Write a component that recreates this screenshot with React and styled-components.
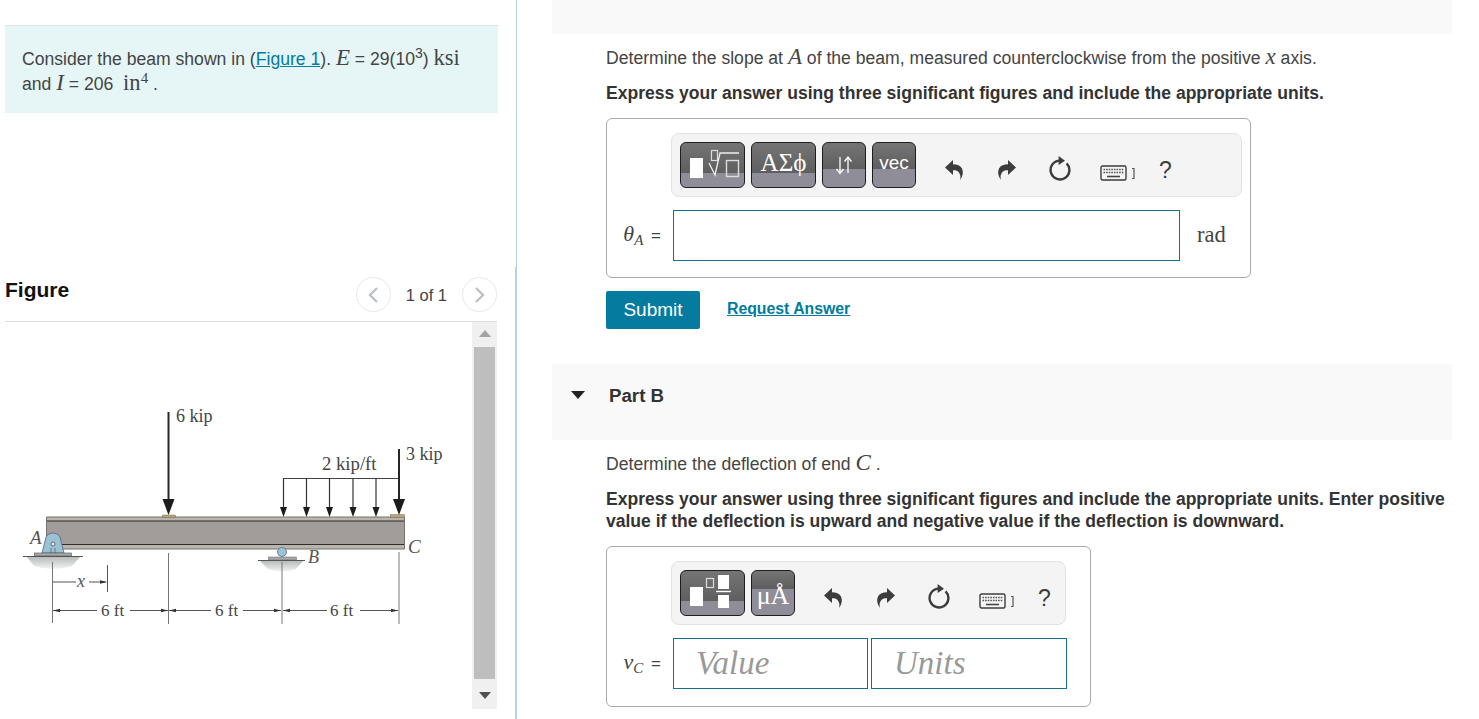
import React from "react";
import styled, { createGlobalStyle } from "styled-components";

const GlobalStyle = createGlobalStyle`
  html, body {
    margin: 0;
    padding: 0;
    background: #fff;
    font-family: "Liberation Sans", Arial, sans-serif;
    color: #333;
  }
`;

function Hat({ x, y, big }) {
  const w = big ? 6 : 3.5;
  const h = big ? 16 : 10;
  return <polygon points={`${x - w},${y - h} ${x + w},${y - h} ${x},${y}`} fill="#1c1c1c" />;
}

function DimTick({ x, y, dir }) {
  return <polygon points={`${x},${y} ${x + dir * 7},${y - 1.8} ${x + dir * 7},${y + 1.8}`} fill="#333" />;
}

function BeamFigure() {
  const loads = [283.5, 306.5, 329.5, 353, 376];
  return (
    <svg width="467" height="387" viewBox="5 322 467 387">
      <defs>
        <linearGradient id="ground" x1="0" y1="0" x2="0" y2="1">
          <stop offset="0" stopColor="#b9bcbc" />
          <stop offset="1" stopColor="#f2f3f3" />
        </linearGradient>
      </defs>

      {/* beam */}
      <rect x="46.5" y="517" width="358" height="32" fill="#a29c9b" />
      <rect x="46.5" y="517" width="358" height="4" fill="#b9b5ad" />
      <rect x="46.5" y="545" width="358" height="4" fill="#b9b5ad" />
      <path d="M46.5 521H404.5M46.5 544.5H404.5" stroke="#2f2d2d" strokeWidth="1" />
      <path d="M46.5 549V517H404.5V549H46.5" stroke="#77736f" strokeWidth="1" fill="none" />

      {/* support A */}
      <path d="M23 556.5H83" stroke="#555" strokeWidth="1" />
      <path d="M27 557H80L72 566Q53 572 34 566Z" fill="url(#ground)" />
      <path d="M42 553L46 537Q48 533 53 533Q58 533 60 537L64 553Z" fill="#9cc0d4" stroke="#4e6b7d" strokeWidth="0.8" />
      <circle cx="53" cy="544" r="2" fill="#e8f1f5" stroke="#3b4f5c" strokeWidth="0.8" />
      <path d="M51 548V553M55 548V553" stroke="#4e6b7d" strokeWidth="0.8" />
      <rect x="34.5" y="553" width="37" height="3" fill="#a7a9a8" stroke="#555" strokeWidth="0.6" />
      <text x="30" y="544" fontFamily="Liberation Serif" fontStyle="italic" fontSize="19" fill="#555">A</text>

      {/* 6 kip */}
      <path d="M168.5 412V500" stroke="#262626" strokeWidth="2" />
      <Hat x={168.5} y={515} big />
      <rect x="162.5" y="515" width="13" height="2.5" fill="#b7a67b" stroke="#6b6243" strokeWidth="0.4" />
      <text x="176" y="421.5" fontFamily="Liberation Serif" fontSize="18" fill="#444">6 kip</text>

      {/* distributed load */}
      <path d="M283 478.5H399" stroke="#444" strokeWidth="1" />
      {loads.map((x) => (
        <g key={x}>
          <path d={`M${x} 478V508`} stroke="#333" strokeWidth="1.2" />
          <Hat x={x} y={517} />
        </g>
      ))}
      <text x="322" y="470" fontFamily="Liberation Serif" fontSize="18.7" fill="#444">2 kip/ft</text>

      {/* 3 kip */}
      <path d="M399 449V500" stroke="#262626" strokeWidth="2" />
      <Hat x={399} y={515} big />
      <rect x="390.5" y="514.5" width="14" height="3" fill="#b7a67b" stroke="#6b6243" strokeWidth="0.4" />
      <text x="406" y="460" fontFamily="Liberation Serif" fontSize="18" fill="#444">3 kip</text>

      {/* support B */}
      <path d="M258 560.5H305" stroke="#555" strokeWidth="1" />
      <path d="M260 561H303L296 569Q282 574 268 569Z" fill="url(#ground)" />
      <rect x="268.5" y="557" width="28" height="3" fill="#a7a9a8" stroke="#666" strokeWidth="0.5" />
      <circle cx="282" cy="552" r="4.5" fill="#9cc3d3" stroke="#54707d" strokeWidth="0.8" />
      <text x="308" y="563" fontFamily="Liberation Serif" fontStyle="italic" fontSize="18" fill="#555">B</text>
      <text x="408" y="553" fontFamily="Liberation Serif" fontStyle="italic" fontSize="19" fill="#555">C</text>

      {/* dimension lines */}
      <path d="M52.5 562V623M168.5 553V624M282 562V624M399 552V624" stroke="#777" strokeWidth="1" />
      <path d="M107.5 565V592" stroke="#555" strokeWidth="1" />
      <path d="M53 582H76M89 582H106" stroke="#555" strokeWidth="1" />
      <DimTick x={107} y={582} dir={-1} />
      <text x="77" y="587" fontFamily="Liberation Serif" fontStyle="italic" fontSize="18" fill="#555">x</text>

      <path d="M53 610.5H97M130 610.5H168M169 610.5H211M243 610.5H281M283 610.5H327M360 610.5H398" stroke="#555" strokeWidth="1" />
      <DimTick x={53} y={610.5} dir={1} />
      <DimTick x={168} y={610.5} dir={-1} />
      <DimTick x={169} y={610.5} dir={1} />
      <DimTick x={281} y={610.5} dir={-1} />
      <DimTick x={283} y={610.5} dir={1} />
      <DimTick x={398} y={610.5} dir={-1} />
      <text x="101" y="616" fontFamily="Liberation Serif" fontSize="17" fill="#444">6 ft</text>
      <text x="215" y="616" fontFamily="Liberation Serif" fontSize="17" fill="#444">6 ft</text>
      <text x="330" y="616" fontFamily="Liberation Serif" fontSize="17" fill="#444">6 ft</text>
    </svg>
  );
}

function UndoIcon({ flip }) {
  return (
    <svg width="20" height="22" viewBox="0 0 20 22" style={flip ? { transform: "scaleX(-1)" } : undefined}>
      <path d="M9 1L1 8.5L9 16V11.2C13 11 15.6 12.6 16.4 17C16.5 18.4 16.4 19.6 16 21C19 17 19.6 13 18 9.6C16.4 6.4 13 5.2 9 5.2Z" fill="#3c3c3c" />
    </svg>
  );
}

function ResetIcon() {
  return (
    <svg width="24" height="26" viewBox="0 0 24 26">
      <path d="M18.6 8.3A9.4 9.4 0 1 1 11 5.65" fill="none" stroke="#3c3c3c" strokeWidth="2.4" />
      <polygon points="10.6,1 17,5.8 10.6,10" fill="#3c3c3c" />
    </svg>
  );
}

function KeyboardIcon() {
  return (
    <svg width="36" height="16" viewBox="0 0 36 16">
      <rect x="1" y="1" width="25" height="14" rx="1.5" fill="#f6f6f6" stroke="#3c3c3c" strokeWidth="1.4" />
      <path d="M3.5 4.5H23.5M3.5 7.5H23.5" stroke="#555" strokeWidth="1.6" strokeDasharray="1.6 1" />
      <path d="M7 11.5H20" stroke="#444" strokeWidth="1.6" />
      <path d="M32 3.5H34V13.5H32" fill="none" stroke="#555" strokeWidth="1.2" />
    </svg>
  );
}

function TemplatesGlyph() {
  return (
    <svg width="63" height="44" viewBox="1 1 63 44">
      <rect x="10" y="16" width="13" height="20" fill="#fff" />
      <rect x="31.5" y="8.5" width="6" height="10" fill="none" stroke="#ddd" strokeWidth="1.2" />
      <path d="M29 21L35 33L40 11H59" fill="none" stroke="#eee" strokeWidth="1.3" />
      <rect x="46.5" y="18.5" width="12" height="16" fill="none" stroke="#ddd" strokeWidth="1.4" />
    </svg>
  );
}

function FractionGlyph() {
  return (
    <svg width="63" height="44" viewBox="1 1 63 44">
      <rect x="10" y="17" width="13" height="19" fill="#fff" />
      <rect x="26.5" y="8.5" width="7" height="9" fill="none" stroke="#ddd" strokeWidth="1.2" />
      <rect x="38" y="5" width="11" height="14" fill="#fff" />
      <rect x="38" y="25" width="11" height="13" fill="#fff" />
      <path d="M36 21.5H51" stroke="#fff" strokeWidth="1.4" />
    </svg>
  );
}

function Toolbar({ children }) {
  return (
    <ToolbarBox>
      {children}
      <UndoSlot><UndoIcon /></UndoSlot>
      <ToolSlot><UndoIcon flip /></ToolSlot>
      <ResetSlot><ResetIcon /></ResetSlot>
      <KeySlot><KeyboardIcon /></KeySlot>
      <HelpSlot>?</HelpSlot>
    </ToolbarBox>
  );
}

export default function App() {
  return (
    <>
      <GlobalStyle />
      <Page>
        <LeftPanel>
          <InfoBox>
            Consider the beam shown in (<InfoLink>Figure 1</InfoLink>). <MathVar>E</MathVar> = 29(10<Sup>3</Sup>) <MathText>ksi</MathText>
            <br />
            and <MathVar>I</MathVar> = 206 &nbsp;<MathText>in</MathText><MathSup>4</MathSup> .
          </InfoBox>
          <FigureHeader>
            <FigureTitle>Figure</FigureTitle>
            <Pager>
              <PagerButton $off>
                <svg width="12" height="18" viewBox="0 0 12 18"><path d="M10 2L3 9L10 16" fill="none" stroke="#bcc2c9" strokeWidth="2.4" /></svg>
              </PagerButton>
              <PagerCount>1 of 1</PagerCount>
              <PagerButton>
                <svg width="12" height="18" viewBox="0 0 12 18"><path d="M2 2L9 9L2 16" fill="none" stroke="#bcc2c9" strokeWidth="2.4" /></svg>
              </PagerButton>
            </Pager>
          </FigureHeader>
          <FigureViewport>
            <BeamFigure />
            <ScrollTrack>
              <ArrowUp />
              <ScrollThumb />
              <ArrowDown />
            </ScrollTrack>
          </FigureViewport>
        </LeftPanel>

        <RightPanel>
          <TopBand />
          <Part>
            <Prompt>
              Determine the slope at <MathVar>A</MathVar> of the beam, measured counterclockwise from the positive <MathVar>x</MathVar> axis.
            </Prompt>
            <Instruction>Express your answer using three significant figures and include the appropriate units.</Instruction>
            <AnswerBox $width={645} $gap={14} $height={160}>
              <Toolbar>
                <MathButton $wide $split={69}><TemplatesGlyph /></MathButton>
                <MathButton $wide $split={69}><GreekLabel>ΑΣϕ</GreekLabel></MathButton>
                <MathButton $split={60}>
                  <svg width="24" height="24" viewBox="0 0 24 24"><path d="M8 4V20M4.5 16L8 20.5L11.5 16M16 20V4M12.5 8.5L16 4L19.5 8.5" fill="none" stroke="#fff" strokeWidth="1.3" /></svg>
                </MathButton>
                <MathButton $split={60}><VecLabel>vec</VecLabel></MathButton>
              </Toolbar>
              <InputRow>
                <SymbolLabel><SymbolVar>θ</SymbolVar><SymbolSub>A</SymbolSub> =</SymbolLabel>
                <AnswerField $width={507} />
                <UnitLabel>rad</UnitLabel>
              </InputRow>
            </AnswerBox>
            <Actions>
              <SubmitButton>Submit</SubmitButton>
              <RequestLink>Request Answer</RequestLink>
            </Actions>
          </Part>

          <PartBand>
            <Caret />
            <PartTitle>Part B</PartTitle>
          </PartBand>
          <Part>
            <Prompt>Determine the deflection of end <MathVar>C</MathVar> .</Prompt>
            <Instruction>
              Express your answer using three significant figures and include the appropriate units. Enter positive
              <br />
              value if the deflection is upward and negative value if the deflection is downward.
            </Instruction>
            <AnswerBox $width={485} $gap={14} $height={161}>
              <SmallToolbar>
                <Toolbar>
                  <MathButton $wide $split={69}><FractionGlyph /></MathButton>
                  <MathButton $split={40}><UnitsGlyph>μÅ</UnitsGlyph></MathButton>
                </Toolbar>
              </SmallToolbar>
              <InputRow>
                <SymbolLabel><SymbolVar>v</SymbolVar><SymbolSub>C</SymbolSub> =</SymbolLabel>
                <AnswerField $width={195}><Placeholder>Value</Placeholder></AnswerField>
                <SecondField $width={196}><Placeholder>Units</Placeholder></SecondField>
              </InputRow>
            </AnswerBox>
          </Part>
        </RightPanel>
      </Page>
    </>
  );
}

const Page = styled.div`
  display: flex;
  height: 719px;
  overflow: hidden;
`;

const LeftPanel = styled.div`
  position: relative;
  box-sizing: border-box;
  width: 517px;
  flex: none;
  padding: 25px 18px 0 5px;
  border-right: 1px solid #b6d0e4;

  &::after {
    content: "";
    position: absolute;
    top: 267px;
    bottom: 0;
    right: 0;
    width: 1px;
    background: #b6d0e4;
  }
`;

const InfoBox = styled.div`
  box-sizing: border-box;
  height: 88px;
  width: 493px;
  padding: 21px 17px 0;
  background: #e6f6f7;
  border-top: 1px solid #dde3e3;
  font-size: 17.6px;
  line-height: 25px;
  color: #444;
`;

const InfoLink = styled.span`
  color: #007c9e;
  text-decoration: underline;
`;

const MathVar = styled.span`
  font-family: "Liberation Serif", serif;
  font-style: italic;
  font-size: 23px;
  line-height: 0;
`;

const MathText = styled.span`
  font-family: "Liberation Serif", serif;
  font-size: 22.5px;
  line-height: 0;
`;

const Sup = styled.sup`
  font-size: 14px;
  line-height: 0;
`;

const MathSup = styled.sup`
  font-family: "Liberation Serif", serif;
  font-size: 15px;
  line-height: 0;
`;

const FigureHeader = styled.div`
  box-sizing: border-box;
  display: flex;
  justify-content: space-between;
  height: 45px;
  width: 492px;
  margin-top: 164px;
  border-bottom: 1px solid #ddd;
`;

const FigureTitle = styled.h2`
  margin: 0;
  font-size: 21px;
  line-height: 25px;
  font-weight: bold;
  color: #111;
`;

const Pager = styled.div`
  display: flex;
  align-items: flex-start;
  gap: 15px;
`;

const PagerButton = styled.div`
  box-sizing: border-box;
  display: flex;
  align-items: center;
  justify-content: center;
  width: 35px;
  height: 35px;
  border: 1px solid #e8e8e8;
  border-radius: 50%;
`;

const PagerCount = styled.span`
  font-size: 16.5px;
  line-height: 37px;
  color: #444;
`;

const FigureViewport = styled.div`
  display: flex;
  width: 492px;
  height: 387px;
`;

const ScrollTrack = styled.div`
  box-sizing: border-box;
  display: flex;
  flex-direction: column;
  align-items: center;
  width: 25px;
  height: 387px;
  background: #f0f0f0;
`;

const ScrollThumb = styled.div`
  width: 21px;
  height: 332px;
  background: #bebebe;
`;

const ArrowUp = styled.div`
  width: 0;
  height: 0;
  margin: 8px 0 10px;
  border-left: 6px solid transparent;
  border-right: 6px solid transparent;
  border-bottom: 7px solid #a3a3a3;
`;

const ArrowDown = styled.div`
  width: 0;
  height: 0;
  margin-top: 13px;
  border-left: 6px solid transparent;
  border-right: 6px solid transparent;
  border-top: 7px solid #505050;
`;

const RightPanel = styled.div`
  width: 900px;
  margin-left: 35px;
  flex: none;
`;

const TopBand = styled.div`
  height: 34px;
  background: #f9f9f9;
`;

const Part = styled.section`
  padding-left: 54px;
`;

const Prompt = styled.p`
  margin: 0;
  padding-top: 12px;
  font-size: 17.6px;
  line-height: 24px;
  color: #444;
`;

const Instruction = styled.p`
  margin: 12px 0 0;
  font-size: 17.55px;
  font-weight: bold;
  line-height: 22px;
  color: #333;
  white-space: nowrap;
`;

const AnswerBox = styled.div`
  box-sizing: border-box;
  width: ${(p) => p.$width}px;
  height: ${(p) => p.$height}px;
  margin-top: ${(p) => p.$gap}px;
  padding-top: 14px;
  border: 1px solid #aaa;
  border-radius: 6px;
`;

const ToolbarBox = styled.div`
  box-sizing: border-box;
  display: flex;
  gap: 6px;
  width: 571px;
  height: 64px;
  margin-left: 64px;
  padding: 8px 8px 0;
  background: #f4f4f4;
  border: 1px solid #e2e2e2;
  border-radius: 8px;
`;

const SmallToolbar = styled.div`
  & > div {
    width: 395px;
  }
`;

const MathButton = styled.div`
  box-sizing: border-box;
  display: flex;
  align-items: center;
  justify-content: center;
  width: ${(p) => (p.$wide ? 65 : 44)}px;
  height: 46px;
  background: linear-gradient(#757575, #5e5e5e ${(p) => p.$split}%, #8f8d98 ${(p) => p.$split}%, #8f8d98);
  border: 1px solid #1e1e1e;
  border-radius: 6px;
`;

const GreekLabel = styled.span`
  padding-bottom: 4px;
  font-family: "Liberation Serif", serif;
  font-size: 25px;
  color: #fff;
  white-space: nowrap;
`;

const UnitsGlyph = styled(GreekLabel)`
  padding-bottom: 0;
  padding-top: 5px;
  font-size: 26px;
`;

const VecLabel = styled.span`
  font-size: 19px;
  color: #fff;
  padding-bottom: 4px;
`;

const ToolSlot = styled.div`
  display: flex;
  justify-content: center;
  width: 47px;
  padding-top: 17px;
`;

const UndoSlot = styled(ToolSlot)`
  margin-left: 8px;
`;

const ResetSlot = styled(ToolSlot)`
  padding-top: 13px;
`;

const KeySlot = styled(ToolSlot)`
  width: 50px;
  margin-left: 4px;
  padding-top: 23px;
`;

const HelpSlot = styled.div`
  margin-left: 10px;
  padding-top: 15px;
  font-size: 23px;
  line-height: 26px;
  color: #3c3c3c;
`;

const InputRow = styled.div`
  display: flex;
  align-items: center;
  margin-top: 13px;
  height: 51px;
`;

const SymbolLabel = styled.div`
  box-sizing: border-box;
  width: 66px;
  padding: 0 12px 4px 0;
  text-align: right;
  font-size: 17px;
  color: #444;
  white-space: nowrap;
`;

const SymbolVar = styled.span`
  font-family: "Liberation Serif", serif;
  font-style: italic;
  font-size: 22px;
`;

const SymbolSub = styled.sub`
  margin-right: 3px;
  font-family: "Liberation Serif", serif;
  font-style: italic;
  font-size: 15px;
  line-height: 0;
`;

const AnswerField = styled.div`
  box-sizing: border-box;
  width: ${(p) => p.$width}px;
  height: 51px;
  padding-left: 22px;
  border: 1px solid #14708f;
`;

const SecondField = styled(AnswerField)`
  margin-left: 3px;
`;

const Placeholder = styled.span`
  font-family: "Liberation Serif", serif;
  font-style: italic;
  font-size: 33px;
  line-height: 49px;
  color: #999;
`;

const UnitLabel = styled.span`
  margin-left: 17px;
  padding-bottom: 2px;
  font-family: "Liberation Serif", serif;
  font-size: 22.5px;
  color: #444;
`;

const Actions = styled.div`
  display: flex;
  gap: 27px;
  margin-top: 13px;
`;

const SubmitButton = styled.div`
  box-sizing: border-box;
  width: 94px;
  height: 38px;
  background: #047b9f;
  border-radius: 2px;
  text-align: center;
  font-size: 19px;
  line-height: 38px;
  color: #fff;
`;

const RequestLink = styled.span`
  padding-top: 9px;
  font-size: 15.8px;
  font-weight: bold;
  color: #007c9e;
  text-decoration: underline;
`;

const PartBand = styled.div`
  display: flex;
  box-sizing: border-box;
  height: 76px;
  margin-top: 35px;
  padding: 21px 0 0 19px;
  background: #f9f9f9;
`;

const Caret = styled.div`
  width: 0;
  height: 0;
  margin: 6px 24px 0 0;
  border-left: 7px solid transparent;
  border-right: 7px solid transparent;
  border-top: 8px solid #222;
`;

const PartTitle = styled.span`
  font-size: 18.7px;
  line-height: 22px;
  font-weight: bold;
  color: #333;
`;
